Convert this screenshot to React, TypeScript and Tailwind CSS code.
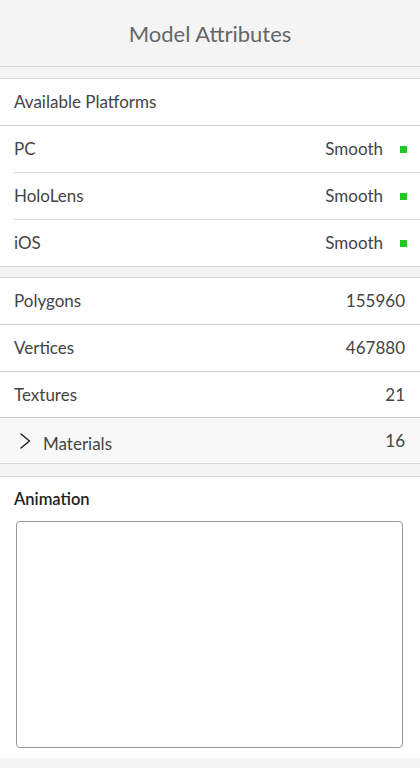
type Row = { label: string; value: string; status?: boolean };

const platforms: Row[] = [
  { label: 'PC', value: 'Smooth', status: true },
  { label: 'HoloLens', value: 'Smooth', status: true },
  { label: 'iOS', value: 'Smooth', status: true },
];

const stats: Row[] = [
  { label: 'Polygons', value: '155960' },
  { label: 'Vertices', value: '467880' },
  { label: 'Textures', value: '21' },
];

const Gap = ({ h = 'h-[13px]' }: { h?: string }) => (
  <div className={h + ' shrink-0 bg-[#f4f4f4] border-t border-b border-[#d6d6d6]'} />
);

const App = () => {
  return (
    <div
      className="w-[420px] h-[768px] bg-[#f4f4f4] flex flex-col text-[#444] overflow-hidden"
      style={{ fontFamily: 'Lato, "Noto Sans", sans-serif' }}
    >
      <div className="h-[66px] shrink-0 flex items-center justify-center text-[22px] text-[#666]">
        Model Attributes
      </div>
      <Gap />

      <div className="bg-white">
        <div className="h-[47px] flex items-center px-[14px] text-[17px] border-b border-[#d0d0d0]">
          Available Platforms
        </div>
        {platforms.map((p, i) => (
          <div key={p.label} className="pl-[14px]">
            <div
              className={
                'flex items-center pr-[13px] text-[17px] ' +
                (i < platforms.length - 1 ? 'h-[47px] border-b border-[#d8d8d8]' : 'h-[46px]')
              }
            >
              <span className="flex-1">{p.label}</span>
              <span>{p.value}</span>
              <span className="ml-[17px] w-[7px] h-[7px] bg-[#22c722]" />
            </div>
          </div>
        ))}
      </div>
      <Gap h="h-[12px]" />

      <div className="bg-white">
        {stats.map((s, i) => (
          <div
            key={s.label}
            className={
              'flex items-center px-[14px] text-[17px] border-b border-[#d0d0d0] ' +
              (i < 2 ? 'h-[47px]' : 'h-[46px]')
            }
          >
            <span className="flex-1">{s.label}</span>
            <span className="pr-[1px]">{s.value}</span>
          </div>
        ))}
        <div className="h-[45px] flex items-start pt-[10px] pl-[20px] pr-[15px] text-[17px] bg-[#f8f8f8]">
          <svg width="11" height="16" viewBox="0 0 11 16" className="mt-[5px]">
            <polyline
              points="1,1 9.5,8 1,15"
              fill="none"
              stroke="#222"
              strokeWidth="1.5"
              strokeLinecap="round"
              strokeLinejoin="round"
            />
          </svg>
          <span className="ml-[12px] flex-1 mt-[3px]">Materials</span>
          <span>16</span>
        </div>
      </div>
      <Gap h="h-[14px]" />

      <div className="bg-white px-[16px] pt-[10px] pb-[10px]">
        <div className="text-[16.5px] font-semibold text-[#222] -ml-[2px]">Animation</div>
        <div className="mt-[9px] h-[227px] mr-[1px] border border-[#9a9a9a] rounded-[4px] bg-white" />
      </div>
    </div>
  );
};

export default App;
